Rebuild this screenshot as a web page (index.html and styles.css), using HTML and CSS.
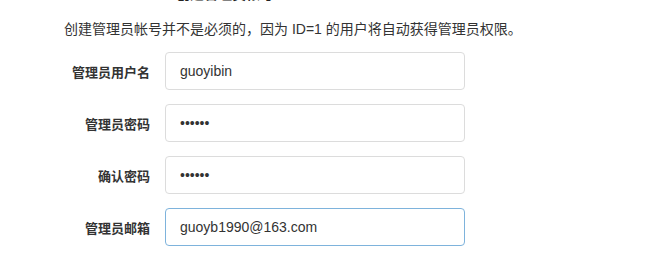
FILE: index.html
```html
<!DOCTYPE html>
<html lang="zh-CN">
<head>
<meta charset="utf-8">
<title>创建管理员帐号</title>
<link rel="stylesheet" href="styles.css">
</head>
<body>
<div class="page">
  <h3 class="title">创建管理员帐号</h3>
  <p class="desc">创建管理员帐号并不是必须的，因为 ID=1 的用户将自动获得管理员权限。</p>
  <form class="form">
    <div class="row">
      <label class="label">管理员用户名</label>
      <input class="input" type="text" value="guoyibin">
    </div>
    <div class="row">
      <label class="label">管理员密码</label>
      <input class="input" type="password" value="123456">
    </div>
    <div class="row">
      <label class="label">确认密码</label>
      <input class="input" type="password" value="123456">
    </div>
    <div class="row">
      <label class="label">管理员邮箱</label>
      <input class="input focused" type="text" value="guoyb1990@163.com">
    </div>
  </form>
</div>
</body>
</html>
```

FILE: styles.css
```css
html, body {
  margin: 0;
  padding: 0;
  background: #fff;
}
body {
  font-family: "Liberation Sans", "Noto Sans CJK SC", sans-serif;
  color: #333;
  overflow: hidden;
}
.page {
  padding-left: 64px;
}
.title {
  margin: -16px 0 0 0;
  padding-left: 112px;
  font-size: 14px;
  line-height: 20px;
  font-weight: bold;
  color: #222;
}
.desc {
  margin: 15px 0 0 0;
  font-size: 14px;
  line-height: 20px;
  color: #333;
}
.form {
  margin-top: 13px;
  display: flex;
  flex-direction: column;
  gap: 14px;
}
.row {
  display: grid;
  grid-template-columns: 86px 300px;
  column-gap: 15px;
  align-items: center;
}
.label {
  text-align: right;
  font-size: 13px;
  font-weight: bold;
  color: #333;
}
.input {
  box-sizing: border-box;
  width: 300px;
  height: 38px;
  margin: 0;
  padding: 0 14px;
  border: 1px solid #dcdcdc;
  border-radius: 4px;
  font-family: "Liberation Sans", sans-serif;
  font-size: 14px;
  color: #333;
  background: #fff;
  outline: none;
}
.focused {
  border-color: #7eb3dc;
}
```
